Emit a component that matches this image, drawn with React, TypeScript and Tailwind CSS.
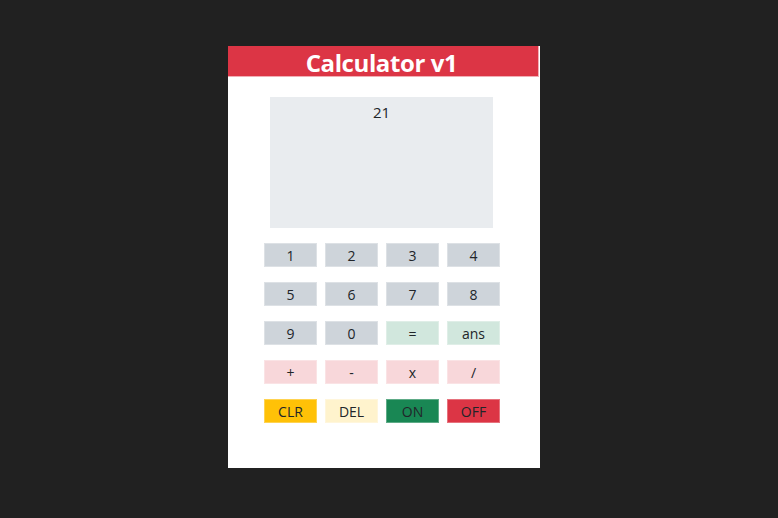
import React from 'react';

type Key = { label: string; color: string };

const keys: Key[] = [
  { label: '1', color: 'bg-[#ced4da]' },
  { label: '2', color: 'bg-[#ced4da]' },
  { label: '3', color: 'bg-[#ced4da]' },
  { label: '4', color: 'bg-[#ced4da]' },
  { label: '5', color: 'bg-[#ced4da]' },
  { label: '6', color: 'bg-[#ced4da]' },
  { label: '7', color: 'bg-[#ced4da]' },
  { label: '8', color: 'bg-[#ced4da]' },
  { label: '9', color: 'bg-[#ced4da]' },
  { label: '0', color: 'bg-[#ced4da]' },
  { label: '=', color: 'bg-[#d1e7dd]' },
  { label: 'ans', color: 'bg-[#d1e7dd]' },
  { label: '+', color: 'bg-[#f8d7da]' },
  { label: '-', color: 'bg-[#f8d7da]' },
  { label: 'x', color: 'bg-[#f8d7da]' },
  { label: '/', color: 'bg-[#f8d7da]' },
  { label: 'CLR', color: 'bg-[#ffc107]' },
  { label: 'DEL', color: 'bg-[#fff3cd]' },
  { label: 'ON', color: 'bg-[#198754]' },
  { label: 'OFF', color: 'bg-[#dc3545]' },
];

export default function App() {
  return (
    <div
      className="w-full h-[518px] bg-[#212121] pt-[46px] pl-[228px]"
      style={{ fontFamily: '"Open Sans", "Noto Sans", sans-serif' }}
    >
      <div className="w-[312px] h-[422px] bg-white flex flex-col">
        {/* Header */}
        <div className="w-[311px] h-[31px] bg-[#dc3545] border-r border-b border-[#f1aeb5] flex items-center justify-center">
          <h1 className="text-white font-bold text-[24px] tracking-[-0.4px] leading-none mt-[3px] -ml-[3px]">Calculator v1</h1>
        </div>

        {/* Display */}
        <div className="mt-[20px] ml-[42px] w-[223px] h-[131px] bg-[#e9ecef] flex justify-center pt-[5px]">
          <span className="text-[15px] text-[#212529] leading-[20px]">21</span>
        </div>

        {/* Keypad */}
        <div className="mt-[15px] ml-[36px] grid grid-cols-[repeat(4,53px)] gap-x-[8px] gap-y-[15px]">
          {keys.map(k => (
            <button
              key={k.label}
              className={`h-[24px] ${k.color} border border-white/30 text-[14px] text-[#212529] leading-none flex items-center justify-center pt-[1px]`}
            >
              {k.label}
            </button>
          ))}
        </div>
      </div>
    </div>
  );
}
